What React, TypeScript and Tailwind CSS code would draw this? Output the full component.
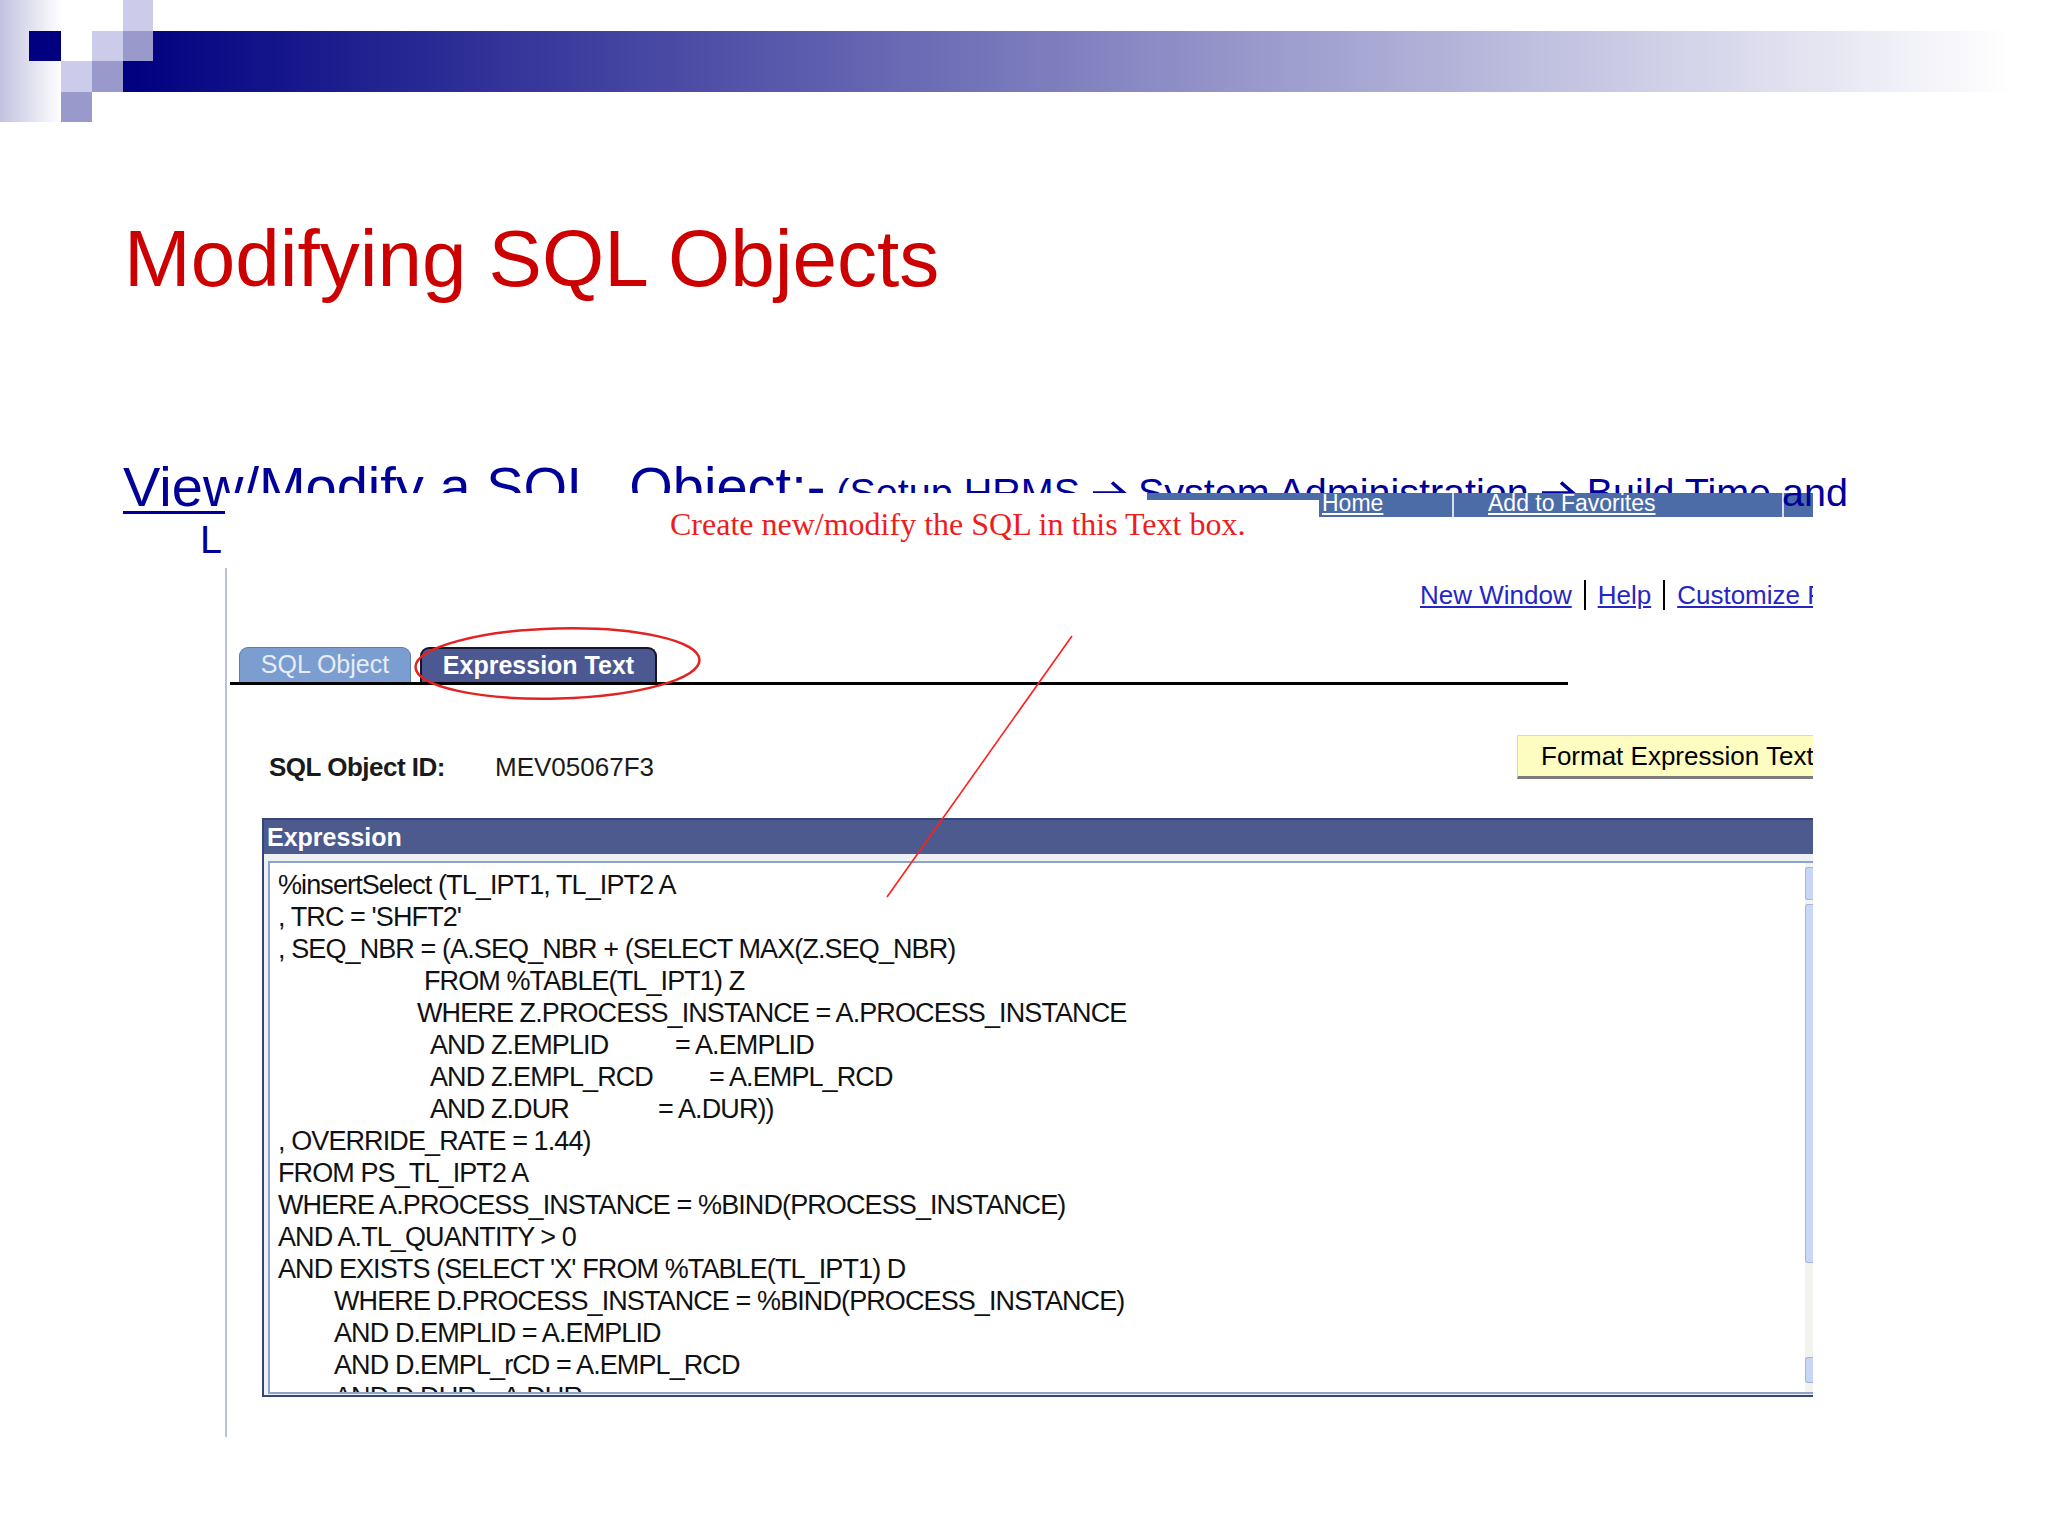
import React from 'react';

type CodeLine = {
  text: string;
  indent?: string;
  col?: string;
  rest?: string;
};

// Expression text as it shows in the PeopleSoft text box (indents measured off the screenshot)
const CODE_LINES: CodeLine[] = [
  { text: '%insertSelect (TL_IPT1, TL_IPT2 A' },
  { text: ", TRC = 'SHFT2'" },
  { text: ', SEQ_NBR = (A.SEQ_NBR + (SELECT MAX(Z.SEQ_NBR)' },
  { text: 'FROM %TABLE(TL_IPT1) Z', indent: 'pl-[146px]' },
  { text: 'WHERE Z.PROCESS_INSTANCE = A.PROCESS_INSTANCE', indent: 'pl-[139px]' },
  { text: 'AND Z.EMPLID', indent: 'pl-[152px]', col: 'w-[245px]', rest: '= A.EMPLID' },
  { text: 'AND Z.EMPL_RCD', indent: 'pl-[152px]', col: 'w-[279px]', rest: '= A.EMPL_RCD' },
  { text: 'AND Z.DUR', indent: 'pl-[152px]', col: 'w-[228px]', rest: '= A.DUR))' },
  { text: ', OVERRIDE_RATE = 1.44)' },
  { text: 'FROM PS_TL_IPT2 A' },
  { text: 'WHERE A.PROCESS_INSTANCE = %BIND(PROCESS_INSTANCE)' },
  { text: 'AND A.TL_QUANTITY > 0' },
  { text: "AND EXISTS (SELECT 'X' FROM %TABLE(TL_IPT1) D" },
  { text: 'WHERE D.PROCESS_INSTANCE = %BIND(PROCESS_INSTANCE)', indent: 'pl-[56px]' },
  { text: 'AND D.EMPLID = A.EMPLID', indent: 'pl-[56px]' },
  { text: 'AND D.EMPL_rCD = A.EMPL_RCD', indent: 'pl-[56px]' },
  { text: 'AND D.DUR = A.DUR', indent: 'pl-[56px]' },
];

function TopBanner() {
  return (
    <svg className="block" width="2048" height="125" viewBox="0 0 2048 125" aria-hidden="true">
      <defs>
        <linearGradient id="bannerBar" x1="0" x2="1" y1="0" y2="0">
          <stop offset="0" stopColor="#000080" />
          <stop offset="1" stopColor="#ffffff" />
        </linearGradient>
        <linearGradient id="bannerFade" x1="0" x2="1" y1="0" y2="0">
          <stop offset="0" stopColor="#c2c2e0" />
          <stop offset="1" stopColor="#ffffff" />
        </linearGradient>
      </defs>
      <rect x="0" y="0" width="62" height="122" fill="url(#bannerFade)" />
      <rect x="123" y="31" width="1890" height="61" fill="url(#bannerBar)" />
      <rect x="29" y="31" width="32" height="30" fill="#000080" />
      <rect x="92" y="31" width="31" height="30" fill="#ccccea" />
      <rect x="123" y="31" width="30" height="30" fill="#9999cc" />
      <rect x="123" y="0" width="30" height="31" fill="#ccccea" />
      <rect x="61" y="61" width="31" height="31" fill="#ccccea" />
      <rect x="92" y="61" width="31" height="31" fill="#9999cc" />
      <rect x="61" y="92" width="31" height="30" fill="#9999cc" />
    </svg>
  );
}

// Wingdings-style menu arrow used in the slide's navigation path
function Arrow() {
  return (
    <svg className="inline-block align-baseline" width="36" height="28" viewBox="0 0 36 28" aria-hidden="true">
      <path
        d="M2 15 H32 M21 4.5 L33 15 L21 25.5"
        fill="none"
        stroke="#000099"
        strokeWidth="3.6"
        strokeLinejoin="miter"
      />
    </svg>
  );
}

function ScrollSliver() {
  return (
    <div className="flex w-[8px] flex-col bg-[#f3f3ee]">
      <div className="mt-[4px] h-[33px] rounded-l-[3px] border border-r-0 border-[#a3b6e2] bg-[#c7d5f7]" />
      <div className="mt-[4px] h-[359px] rounded-l-[3px] border border-r-0 border-[#a3b6e2] bg-[#c9d7f8]" />
      <div className="flex-1" />
      <div className="mb-[9px] h-[26px] rounded-l-[3px] border border-r-0 border-[#a3b6e2] bg-[#c7d5f7]" />
    </div>
  );
}

function ScreenshotPanel() {
  return (
    <div className="absolute left-[225px] top-[493px] z-10 flex h-[944px] w-[1588px] flex-col overflow-hidden bg-white">
      {/* portal header strip */}
      <div className="ml-[922px] flex h-[24px] shrink-0 items-start">
        <div className="h-[7px] w-[172px] bg-[#4b6ca6]" />
        <div className="flex h-[24px] w-[494px] bg-[#4b6ca6] text-[23px] leading-[21px] text-white">
          <div className="w-[133px] pl-[3px]">
            <span className="underline">Home</span>
          </div>
          <div className="w-[2px] bg-[#d5dfee]" />
          <div className="w-[328px] pl-[34px]">
            <span className="underline">Add to Favorites</span>
          </div>
          <div className="w-[2px] bg-[#d5dfee]" />
          <div className="flex-1" />
        </div>
      </div>

      <div className="mt-[51px] flex flex-1 flex-col border-l-2 border-[#b9c3d6] pt-[12px]">
        <div className="ml-[1193px] flex h-[30px] w-max items-center gap-[12px] text-[26px] leading-[30px] text-[#2626c4]">
          <span className="underline">New Window</span>
          <span className="h-[30px] w-[2px] bg-black" />
          <span className="underline">Help</span>
          <span className="h-[30px] w-[2px] bg-black" />
          <span className="underline">Customize Page</span>
        </div>

        <div className="ml-[3px] mt-[37px] flex h-[38px] w-[1338px] items-end gap-[9px] border-b-[3px] border-black pl-[9px]">
          <div className="flex h-[35px] w-[172px] items-center justify-center rounded-t-[9px] border border-b-0 border-[#5b7db3] bg-[#7b9dcf] text-[25px] text-[#e6edf8]">
            SQL Object
          </div>
          <div className="flex h-[35px] w-[237px] items-center justify-center rounded-t-[9px] border-2 border-b-0 border-[#15152e] bg-[#4b5891] text-[25px] font-bold text-white">
            Expression Text
          </div>
        </div>

        <div className="mt-[50px] flex h-[44px] items-end">
          <div className="ml-[42px] flex items-end text-[26px] leading-[24px] text-[#1a1a1a]">
            <span className="w-[226px] font-bold tracking-[-0.5px]">SQL Object ID:</span>
            <span>MEV05067F3</span>
          </div>
          <div className="ml-auto flex h-[44px] w-[296px] items-center whitespace-nowrap border-l border-t border-[#dcdcb4] border-b-[3px] border-b-[#7d7d7d] bg-[#fdfdc1] pl-[23px] text-[26px] text-black">
            Format Expression Text
          </div>
        </div>

        <div className="ml-[35px] mt-[39px] flex flex-col border-y-2 border-l-2 border-[#34457a]">
          <div className="h-[34px] bg-[#4c5a8e] pl-[3px] text-[25px] font-bold leading-[34px] text-white">
            Expression
          </div>
          <div className="bg-[#edf1f6] pb-[1px] pl-[4px] pt-[7px]">
            <div className="flex h-[533px] border-y-2 border-l-2 border-[#8da4c9] bg-white">
              <div className="flex-1 overflow-hidden whitespace-nowrap pl-[8px] pt-[6px] text-[27px] leading-[32px] tracking-[-0.9px] text-[#111111]">
                {CODE_LINES.map((line, i) => (
                  <div key={i} className={line.indent ?? ''}>
                    {line.col ? (
                      <>
                        <span className={`inline-block ${line.col}`}>{line.text}</span>
                        <span>{line.rest}</span>
                      </>
                    ) : (
                      line.text
                    )}
                  </div>
                ))}
              </div>
              <ScrollSliver />
            </div>
          </div>
        </div>
      </div>
    </div>
  );
}

export default function App() {
  return (
    <div className="relative h-[1536px] w-[2048px] overflow-hidden bg-white font-['Liberation_Sans',Arial,sans-serif]">
      <TopBanner />

      <h1 className="mt-[94px] pl-[124px] text-[80px] font-normal leading-none text-[#cc0000]">
        Modifying SQL Objects
      </h1>

      <div className="mt-[160px] h-[56px] whitespace-nowrap pl-[123px] text-[56px] leading-[56px] text-[#000099]">
        <span>
          <span className="underline decoration-[3px] underline-offset-[5px]">View</span>
          {'/Modify a SQL\u00a0 Object:-'}
        </span>
        <span className="text-[39.5px]">
          {' (Setup HRMS '}
          <Arrow />
          {' System Administration '}
          <Arrow />
          {' Build Time '}
        </span>
        <span className="relative z-20 text-[39.5px]">and</span>
      </div>
      <div className="pl-[200px] text-[39.5px] leading-[48px] text-[#000099]">L</div>

      <ScreenshotPanel />

      {/* slide annotations drawn over the screenshot */}
      <p className="absolute left-[670px] top-[508px] z-20 whitespace-nowrap font-['Liberation_Serif','Times_New_Roman',serif] text-[32px] leading-none text-[#ee1d1d]">
        Create new/modify the SQL in this Text box.
      </p>
      <svg
        className="absolute left-[410px] top-[624px] z-20 overflow-visible"
        width="296"
        height="80"
        aria-hidden="true"
      >
        <ellipse
          cx="147.5"
          cy="39.5"
          rx="142"
          ry="35"
          fill="none"
          stroke="#e32222"
          strokeWidth="2.5"
          transform="rotate(-1.5 147.5 39.5)"
        />
      </svg>
      <svg className="absolute left-[880px] top-[630px] z-20" width="200" height="275" aria-hidden="true">
        <line x1="192" y1="6" x2="7" y2="267" stroke="#ff1f1f" strokeWidth="1.6" />
      </svg>
    </div>
  );
}
